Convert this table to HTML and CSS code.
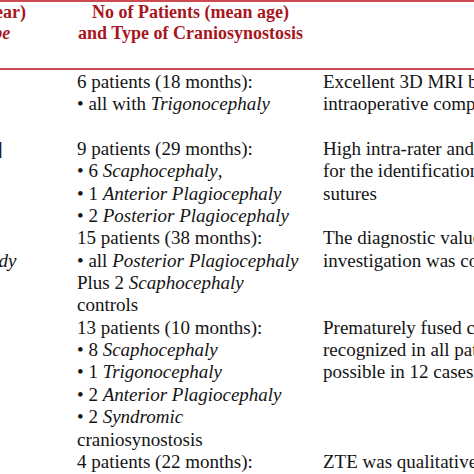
FILE: index.html
```html
<!DOCTYPE html>
<html>
<head>
<meta charset="utf-8">
<link rel="stylesheet" href="styles.css">
</head>
<body>
<div class="frame">
<table class="studies">
  <colgroup>
    <col class="c1"><col class="c2"><col class="c3">
  </colgroup>
  <thead>
    <tr>
      <th class="h1">Author (Year)<br><i>Study type</i></th>
      <th class="h2">No of Patients (mean age)<br>and Type of Craniosynostosis</th>
      <th class="h3">Comments</th>
    </tr>
  </thead>
  <tbody>
    <tr class="first">
      <td class="a"></td>
      <td>6 patients (18 months):<br>• all with <i>Trigonocephaly</i></td>
      <td>Excellent 3D MRI bone imaging with<br>intraoperative comparison</td>
    </tr>
    <tr>
      <td class="a"><span class="ref">Eley [12]</span></td>
      <td>9 patients (29 months):<br>• 6 <i>Scaphocephaly</i>,<br>• 1 <i>Anterior Plagiocephaly</i><br>• 2 <i>Posterior Plagiocephaly</i></td>
      <td>High intra-rater and inter-rater agreement<br>for the identification of the cranial<br>sutures</td>
    </tr>
    <tr>
      <td class="a"><br><i class="study">Cohort study</i></td>
      <td>15 patients (38 months):<br>• all <i>Posterior Plagiocephaly</i><br>Plus 2 <i>Scaphocephaly</i><br>controls</td>
      <td>The diagnostic value of the MRI<br>investigation was comparable to CT</td>
    </tr>
    <tr>
      <td class="a"></td>
      <td>13 patients (10 months):<br>• 8 <i>Scaphocephaly</i><br>• 1 <i>Trigonocephaly</i><br>• 2 <i>Anterior Plagiocephaly</i><br>• 2 <i>Syndromic</i><br>craniosynostosis</td>
      <td>Prematurely fused cranial sutures were<br>recognized in all patients; assessment<br>possible in 12 cases</td>
    </tr>
    <tr>
      <td class="a"></td>
      <td>4 patients (22 months):</td>
      <td>ZTE was qualitatively comparable to CT</td>
    </tr>
  </tbody>
</table>
</div>
</body>
</html>
```

FILE: styles.css
```css
html, body {
  margin: 0;
  padding: 0;
  background: #ffffff;
}
body {
  width: 474px;
  height: 474px;
  overflow: hidden;
  font-family: "Liberation Serif", "Times New Roman", serif;
  color: #141414;
}
.frame {
  margin-left: -130px;
  width: 860px;
}
.studies {
  border-collapse: collapse;
  table-layout: fixed;
  width: 848px;
  border-top: 2px solid #cc4a52;
}
.c1 { width: 202px; }
.c2 { width: 246px; }
.c3 { width: 400px; }
.studies th {
  font-weight: bold;
  font-size: 18px;
  line-height: 21px;
  color: #a8161e;
  text-align: center;
  vertical-align: top;
  padding: 0 5px 24px 5px;
  border-bottom: 2px solid #cc4a52;
}
.studies th.h1 {
  padding-left: 3px;
  padding-right: 1px;
}
.studies th.h2 {
  padding-right: 14px;
}
.studies td {
  font-size: 19px;
  line-height: 22.35px;
  vertical-align: top;
  padding: 0 5px;
  white-space: nowrap;
  overflow: hidden;
}
.studies tr.first td {
  padding-top: 1px;
  padding-bottom: 22.35px;
}
.studies td.a {
  text-align: center;
  padding-right: 13px;
}
```
